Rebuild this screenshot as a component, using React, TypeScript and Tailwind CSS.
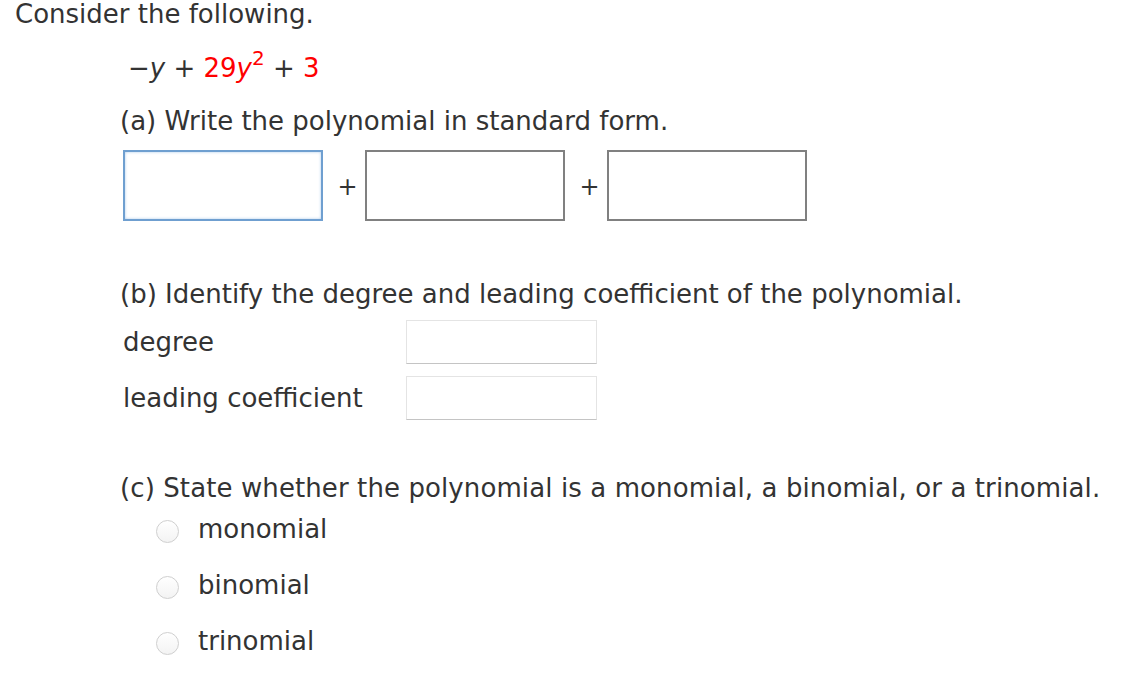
export default function App() {
  const font = { fontFamily: '"DejaVu Sans", Verdana, sans-serif' };
  return (
    <div className="min-h-[696px] w-[1134px] bg-white text-[26px] leading-[26px] text-[#333]" style={font}>
      <p className="pl-[15px] pt-[1px]">Consider the following.</p>

      <p className="mt-[28px] pl-[128px]">
        <span className="italic">−y</span> +{" "}
        <span className="text-[#f00]">
          29<span className="italic">y</span>
          <span className="relative -top-[12px] text-[20px] leading-none">2</span>
        </span>{" "}
        + <span className="text-[#f00]">3</span>
      </p>

      <p className="mt-[27px] pl-[120px]">(a) Write the polynomial in standard form.</p>

      <div className="mt-[16px] flex items-center pl-[123px]">
        <div className="h-[71px] w-[200px] border-2 border-[#6f9fd0] shadow-[inset_0_0_3px_#a9c8ea]" />
        <span className="w-[42px] pl-[7px] pt-[3px] text-center text-[24px]">+</span>
        <div className="h-[71px] w-[200px] border-2 border-[#808080]" />
        <span className="w-[42px] pl-[7px] pt-[3px] text-center text-[24px]">+</span>
        <div className="h-[71px] w-[200px] border-2 border-[#808080]" />
      </div>

      <p className="mt-[60px] pl-[120px]">(b) Identify the degree and leading coefficient of the polynomial.</p>

      <div className="mt-[13px] flex items-center pl-[123px]">
        <span className="w-[283px]">degree</span>
        <div className="h-[44px] w-[191px] border border-[#e4e4e4] border-b-[#c4c4c4]" />
      </div>
      <div className="mt-[12px] flex items-center pl-[123px]">
        <span className="w-[283px]">leading coefficient</span>
        <div className="h-[44px] w-[191px] border border-[#e4e4e4] border-b-[#c4c4c4]" />
      </div>

      <p className="mt-[55px] pl-[120px] tracking-[0.1px]">(c) State whether the polynomial is a monomial, a binomial, or a trinomial.</p>

      <div className="mt-[15px] flex flex-col gap-[29px] pl-[156px]">
        {["monomial", "binomial", "trinomial"].map((t) => (
          <label key={t} className="flex items-start">
            <span className="mt-[4px] h-[23px] w-[23px] rounded-full border border-[#cfcfcf] bg-gradient-to-b from-white to-[#f3f3f3]" />
            <span className="ml-[19px]">{t}</span>
          </label>
        ))}
      </div>
    </div>
  );
}
